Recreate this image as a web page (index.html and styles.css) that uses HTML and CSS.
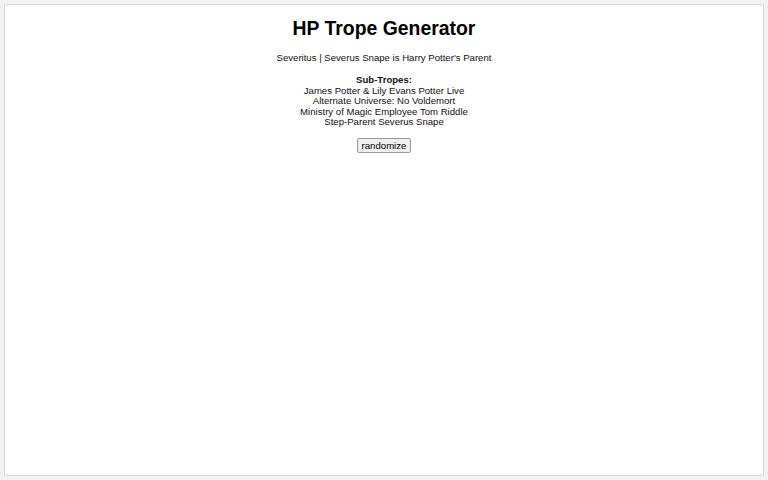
FILE: index.html
```html
<!DOCTYPE html>
<html lang="en">
<head>
    <meta charset="UTF-8">
    <meta name="viewport" content="width=device-width, initial-scale=1.0">
    <title>HP Trope Generator</title>
    <link rel="stylesheet" href="styles.css">
</head>
<body>

    <div class="page">
        <h1>HP Trope Generator</h1>

        <p class="trope" id="trope">Severitus | Severus Snape is Harry Potter's Parent</p>

        <div class="subtropes">
            <b>Sub-Tropes:</b>
            <div id="subList">
                <div>James Potter &amp; Lily Evans Potter Live</div>
                <div>Alternate Universe: No Voldemort</div>
                <div>Ministry of Magic Employee Tom Riddle</div>
                <div>Step-Parent Severus Snape</div>
            </div>
        </div>

        <button class="button" id="randomize">randomize</button>
    </div>

</body>
</html>
```

FILE: styles.css
```css
html, body {
    height: 100%;
}
body {
    margin: 0;
    padding: 4px;
    box-sizing: border-box;
    background-color: #f2f2f2;
    color: #111;
    font-family: "Liberation Sans", Arial, sans-serif;
    font-size: 9.6px;
}
.page {
    height: 100%;
    box-sizing: border-box;
    background-color: #fff;
    border: 1px solid #dcdcdc;
    text-align: center;
    padding-top: 12px;
}
h1 {
    margin: 0 0 12px;
    font-size: 19.4px;
    color: #000;
}
.trope {
    margin: 0 0 12px;
}
.subtropes {
    line-height: 10.6px;
    margin-bottom: 10px;
}
.button {
    font-family: "Liberation Sans", Arial, sans-serif;
    font-size: 9.6px;
    padding: 1px 4px;
    background-color: #efefef;
    border: 1px solid #999;
    border-radius: 2px;
    color: #000;
}
```
